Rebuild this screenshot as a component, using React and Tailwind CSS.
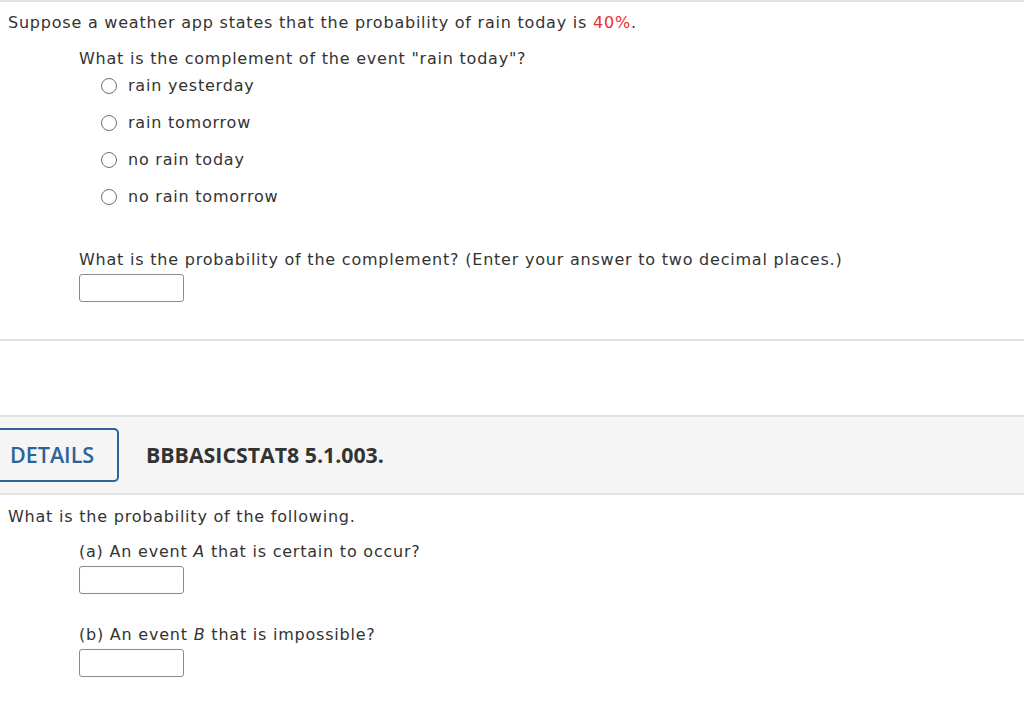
export default function App() {
  const options = ['rain yesterday', 'rain tomorrow', 'no rain today', 'no rain tomorrow']

  return (
    <div className="min-h-screen bg-white text-[#333] text-[16px] tracking-[0.78px]" style={{ fontFamily: '"DejaVu Sans", Verdana, sans-serif' }}>
      {/* question 1 */}
      <div className="border-t-2 border-[#e2e2e2] border-b-2 pb-[37px]">
        <p className="pl-[8px] pt-[11px] leading-[20px]">
          Suppose a weather app states that the probability of rain today is <span className="text-[#e8312a]">40%</span>.
        </p>
        <div className="pl-[79px]">
          <p className="mt-[16px] leading-[20px]">What is the complement of the event "rain today"?</p>
          <div className="pl-[22px] mt-[7px] flex flex-col gap-[17px]">
            {options.map(opt => (
              <label key={opt} className="flex items-center gap-[11px] leading-[20px]">
                <span className="w-[16px] h-[16px] rounded-full border border-[#707070] bg-white shrink-0" />
                <span>{opt}</span>
              </label>
            ))}
          </div>
          <p className="mt-[43px] leading-[20px]">What is the probability of the complement? (Enter your answer to two decimal places.)</p>
          <div className="mt-[4px] w-[105px] h-[28px] border border-[#8a8a8a] rounded-[3px]" />
        </div>
      </div>

      {/* question 2 header */}
      <div className="mt-[74px] bg-[#f5f5f5] border-t-2 border-b-2 border-[#e2e2e2] h-[80px] flex items-center tracking-normal">
        <div className="h-[54px] w-[119px] border-2 border-l-0 border-[#2e6399] rounded-r-[5px] flex items-center pl-[10px]">
          <span className="text-[#2e6399] font-semibold text-[21.5px]" style={{ fontFamily: '"Open Sans", sans-serif' }}>DETAILS</span>
        </div>
        <span className="ml-[27px] font-bold text-[21.3px] text-[#333]" style={{ fontFamily: '"Open Sans", sans-serif' }}>BBBASICSTAT8 5.1.003.</span>
      </div>

      <p className="pl-[8px] mt-[12px] leading-[20px]">What is the probability of the following.</p>
      <div className="pl-[79px]">
        <p className="mt-[15px] leading-[20px]">(a) An event <i>A</i> that is certain to occur?</p>
        <div className="mt-[4px] w-[105px] h-[28px] border border-[#8a8a8a] rounded-[3px]" />
        <p className="mt-[31px] leading-[20px]">(b) An event <i>B</i> that is impossible?</p>
        <div className="mt-[4px] w-[105px] h-[28px] border border-[#8a8a8a] rounded-[3px]" />
      </div>
    </div>
  )
}
